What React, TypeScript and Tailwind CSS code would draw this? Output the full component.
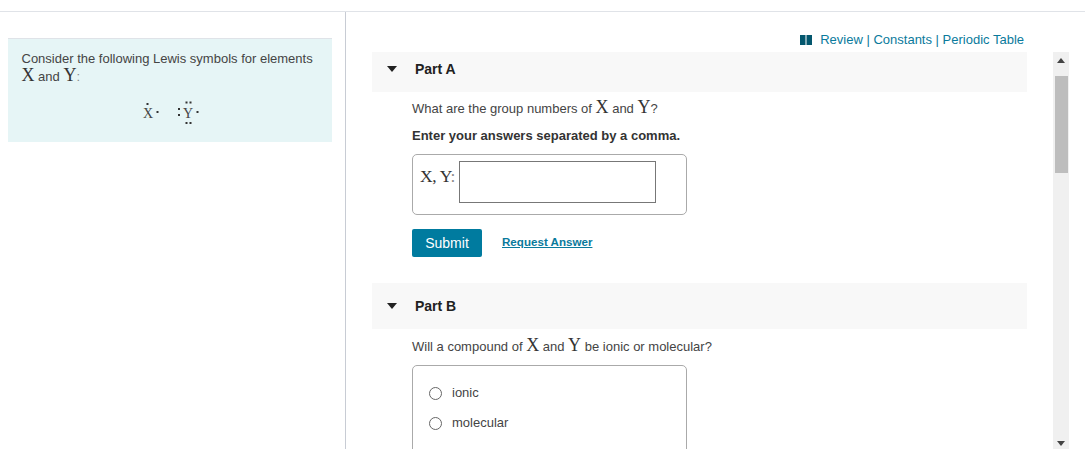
import React from "react";

const M = ({ children, className = "" }: { children: React.ReactNode; className?: string }) => (
  <span className={`font-['Liberation_Serif',serif] text-[18px] leading-[14px] text-[#333] ${className}`}>{children}</span>
);

const Caret = () => (
  <svg width="10" height="6" viewBox="0 0 10 6" className="block">
    <path d="M0 0H10L5 6Z" fill="#222" />
  </svg>
);

const PartHeader = ({ label, h }: { label: string; h: string }) => (
  <div className={`flex items-center bg-[#f8f8f8] ${h}`}>
    <div className="w-[43px] pl-[15px]"><Caret /></div>
    <span className="text-[14px] font-bold text-[#212121]">{label}</span>
  </div>
);

const Radio = ({ label }: { label: string }) => (
  <div className="flex items-center h-[20px]">
    <span className="w-[13px] h-[13px] rounded-full border border-[#666] bg-white ml-[16px] mr-[10px]" />
    <span className="text-[13px] text-[#444]">{label}</span>
  </div>
);

export default function App() {
  return (
    <div className="w-[1085px] h-[449px] overflow-hidden bg-white font-['Liberation_Sans',Arial,sans-serif] flex flex-col">
      <div className="h-[12px] shrink-0 border-b border-[#e0e3e8]" />
      <div className="flex flex-1 min-h-0">
        <div className="w-[346px] shrink-0 border-r border-[#c8ccd4] pt-[26px] pl-[8px] pr-[13px]">
          <div className="h-[104px] bg-[#e6f5f6] border-t border-[#dfe3e8] px-[13.5px] pt-[13px]">
            <p className="text-[13px] leading-[14px] text-[#444] whitespace-nowrap">Consider the following Lewis symbols for elements</p>
            <p className="mt-[2px] text-[13px] leading-[14px] text-[#444]"><M>X</M> and <M>Y</M><span className="text-[#888]">:</span></p>
            <div className="flex justify-center mt-[16px] pr-[2px]">
              <svg width="64" height="26" viewBox="0 0 64 26" className="block">
                <text x="6" y="18" fontFamily="Liberation Serif" fontSize="14" fill="#444">X</text>
                <text x="46" y="18" fontFamily="Liberation Serif" fontSize="14" fill="#444">Y</text>
                <g fill="#333">
                  <rect x="9.5" y="3" width="2" height="2" />
                  <rect x="19.5" y="11" width="2" height="2" />
                  <rect x="41" y="8" width="2" height="2" />
                  <rect x="41" y="14" width="2" height="2" />
                  <rect x="48.5" y="1.5" width="2" height="2" />
                  <rect x="52.5" y="1.5" width="2" height="2" />
                  <rect x="48.5" y="22" width="2" height="2" />
                  <rect x="52.5" y="22" width="2" height="2" />
                  <rect x="59.5" y="11" width="2" height="2" />
                </g>
              </svg>
            </div>
          </div>
        </div>
        <div className="w-[707px] shrink-0 pl-[26px] pr-[26px] min-h-0 overflow-hidden">
          <div className="h-[40px] pr-[3px] pt-[15px] flex items-center justify-end gap-[8px] text-[13px] text-[#0a7a9c]">
            <svg width="12" height="10" viewBox="0 0 12 10" className="block">
              <path d="M0 0H5.5V10H0ZM6.5 0H12V10H6.5Z" fill="#04576e" />
            </svg>
            <span>Review | Constants | Periodic Table</span>
          </div>
          <PartHeader label="Part A" h="h-[40px] pb-[6px]" />
          <div className="pl-[40px]">
            <p className="mt-[8px] h-[18px] leading-[18px] text-[13px] text-[#444]">What are the group numbers of <M>X</M> and <M>Y</M>?</p>
            <p className="mt-[9px] h-[18px] leading-[18px] text-[13px] font-bold text-[#333]">Enter your answers separated by a comma.</p>
            <div className="mt-[9px] w-[275px] h-[61px] rounded-[5px] border border-[#aaa] flex items-start pl-[7px] pt-[6px]">
              <span className="font-['Liberation_Serif',serif] text-[17.5px] tracking-[-0.3px] leading-[30px] text-[#333] whitespace-nowrap w-[39px]">X, Y<span className="text-[#888]">:</span></span>
              <div className="w-[197px] h-[42px] border border-[#777] bg-white" />
            </div>
            <div className="mt-[14px] flex items-start">
              <button className="w-[70px] h-[28px] rounded-[2px] bg-[#007b9f] text-white text-[14px] font-medium">Submit</button>
              <a className="ml-[20px] mt-[4px] text-[11.6px] leading-[18px] font-bold text-[#0a7a9c] underline">Request Answer</a>
            </div>
          </div>
          <div className="mt-[26px]"><PartHeader label="Part B" h="h-[46px]" /></div>
          <div className="pl-[40px]">
            <p className="mt-[9px] h-[18px] leading-[18px] text-[13px] text-[#444]">Will a compound of <M>X</M> and <M>Y</M> be ionic or molecular?</p>
            <div className="mt-[9px] w-[275px] h-[100px] rounded-[5px] border border-[#aaa] pt-[17px] flex flex-col gap-[10px]">
              <Radio label="ionic" />
              <Radio label="molecular" />
            </div>
          </div>
        </div>
        <div className="w-[16px] shrink-0 pt-[40px] min-h-0">
          <div className="h-[397px] bg-[#f0f0f0] flex flex-col items-center">
            <svg width="8" height="5" viewBox="0 0 8 5" className="block mt-[6px]"><path d="M0 5H8L4 0Z" fill="#444" /></svg>
            <div className="w-[13px] h-[97px] ml-[1px] mt-[13px] bg-[#bdbdbd]" />
            <svg width="8" height="5" viewBox="0 0 8 5" className="block mt-auto mb-[3px]"><path d="M0 0H8L4 5Z" fill="#444" /></svg>
          </div>
        </div>
      </div>
    </div>
  );
}
